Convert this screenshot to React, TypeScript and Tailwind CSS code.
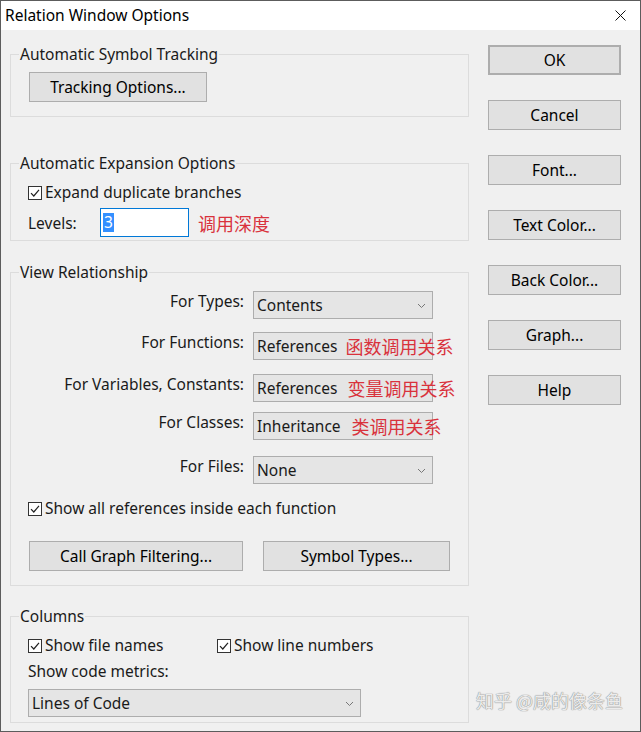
import React from 'react'

const FONT = { fontFamily: '"Noto Sans", "Noto Sans CJK SC", sans-serif' }
const CJK = { fontFamily: '"Noto Sans CJK SC", sans-serif' }

function Check({ label }: { label: string }) {
  return (
    <div className="flex h-5 items-center">
      <svg width="14" height="14" viewBox="0 0 14 14" className="mr-[3px] shrink-0">
        <rect x="0.5" y="0.5" width="13" height="13" fill="#fff" stroke="#333" />
        <path d="M3 7.2 L5.8 10 L11 3.8" fill="none" stroke="#222" strokeWidth="1.2" />
      </svg>
      <span>{label}</span>
    </div>
  )
}

function Button({ label, className = '' }: { label: string; className?: string }) {
  return (
    <div
      className={`flex h-[30px] items-center justify-center border border-[#adadad] bg-[#e1e1e1] pt-[1px] text-black ${className}`}
    >
      {label}
    </div>
  )
}

function Chevron() {
  return (
    <svg width="9" height="6" viewBox="0 0 9 6" className="mr-[6px]">
      <path d="M1 1 L4.5 4.5 L8 1" fill="none" stroke="#777" strokeWidth="1" />
    </svg>
  )
}

function Select({ value, note, noteOffset = 'ml-[12px]' }: { value: string; note?: string; noteOffset?: string }) {
  return (
    <div className="flex h-[28px] w-[180px] items-center border border-[#adadad] bg-[#e5e5e5] pl-[3px] pt-[1px]">
      <span className="whitespace-nowrap">{value}</span>
      {note ? (
        <span className={`whitespace-nowrap text-[18px] text-[#d9323c] ${noteOffset}`} style={CJK}>
          {note}
        </span>
      ) : (
        <>
          <span className="flex-1" />
          <Chevron />
        </>
      )}
    </div>
  )
}

function Group({ title, className = '', children }: { title: string; className?: string; children: React.ReactNode }) {
  return (
    <fieldset className={`border border-[#dcdcdc] ${className}`}>
      <legend className="ml-[8px] px-px leading-5">{title}</legend>
      {children}
    </fieldset>
  )
}

function Row({ label, children, className = '' }: { label: string; children: React.ReactNode; className?: string }) {
  return (
    <div className={`flex items-start ${className}`}>
      <div className="w-[242px] pr-[9px] text-right leading-5">{label}</div>
      {children}
    </div>
  )
}

export default function App() {
  return (
    <div
      className="relative flex h-[732px] w-[641px] flex-col border border-[#5c5c5c] bg-[#f0f0f0] text-[15.5px] text-[#1a1a1a]"
      style={FONT}
    >
      {/* Title bar */}
      <div className="flex h-[29px] items-center justify-between bg-white pl-[4px] pr-[14px]">
        <span className="text-black">Relation Window Options</span>
        <svg width="11" height="11" viewBox="0 0 11 11">
          <path d="M0.5 0.5 L10.5 10.5 M10.5 0.5 L0.5 10.5" stroke="#111" strokeWidth="1" />
        </svg>
      </div>

      <div className="flex">
        {/* Left column */}
        <div className="ml-[9px] flex w-[459px] flex-col">
          <Group title="Automatic Symbol Tracking" className="mt-[14px] pb-[14px]">
            <Button label="Tracking Options..." className="ml-[18px] mt-[8px] w-[178px]" />
          </Group>

          <Group title="Automatic Expansion Options" className="mt-[36px] pb-[3px]">
            <div className="ml-[17px] mt-[10px]">
              <Check label="Expand duplicate branches" />
            </div>
            <div className="ml-[17px] mt-[5px] flex items-center">
              <span className="w-[72px] pt-[2px]">Levels:</span>
              <div className="flex h-[29px] w-[89px] items-center border border-[#0078d7] bg-white pl-[2px]">
                <span className="bg-[#3390ff] px-px leading-[19px] text-white">3</span>
              </div>
              <span className="ml-[9px] pt-[2px] text-[18px] text-[#d9323c]" style={CJK}>
                调用深度
              </span>
            </div>
          </Group>

          <Group title="View Relationship" className="mt-[21px] pb-[14px]">
            <Row label="For Types:" className="mt-[9px]">
              <Select value="Contents" />
            </Row>
            <Row label="For Functions:" className="mt-[13px]">
              <Select value="References" note="函数调用关系" noteOffset="ml-[8px]" />
            </Row>
            <Row label="For Variables, Constants:" className="mt-[14px]">
              <Select value="References" note="变量调用关系" noteOffset="ml-[10px]" />
            </Row>
            <Row label="For Classes:" className="mt-[10px]">
              <Select value="Inheritance" note="类调用关系" noteOffset="ml-[11px]" />
            </Row>
            <Row label="For Files:" className="mt-[16px]">
              <Select value="None" />
            </Row>
            <div className="ml-[17px] mt-[15px]">
              <Check label="Show all references inside each function" />
            </div>
            <div className="ml-[18px] mt-[22px] flex gap-[20px]">
              <Button label="Call Graph Filtering..." className="w-[214px]" />
              <Button label="Symbol Types..." className="w-[187px]" />
            </div>
          </Group>

          <Group title="Columns" className="mt-[20px] pb-[5px]">
            <div className="ml-[17px] mt-[10px] flex">
              <div className="w-[189px]">
                <Check label="Show file names" />
              </div>
              <Check label="Show line numbers" />
            </div>
            <div className="ml-[17px] mt-[5px] leading-5">Show code metrics:</div>
            <div className="ml-[17px] mt-[8px] flex h-[28px] w-[333px] items-center border border-[#adadad] bg-[#e5e5e5] pl-[3px] pt-[1px]">
              <span>Lines of Code</span>
              <span className="flex-1" />
              <Chevron />
            </div>
          </Group>
        </div>

        {/* Right column */}
        <div className="ml-[19px] mt-[15px] flex w-[133px] flex-col gap-[25px]">
          <Button label="OK" className="border-2 border-[#0078d7]" />
          <Button label="Cancel" />
          <Button label="Font..." />
          <Button label="Text Color..." />
          <Button label="Back Color..." />
          <Button label="Graph..." />
          <Button label="Help" />
        </div>
      </div>

      {/* watermark */}
      <div
        className="absolute bottom-[17px] right-[17px] text-[18px] text-[#ececec]"
        style={{ ...CJK, textShadow: '0 0 1px #8a8a8a, 0 0 1px #8a8a8a' }}
      >
        知乎 @咸的像条鱼
      </div>
    </div>
  )
}
